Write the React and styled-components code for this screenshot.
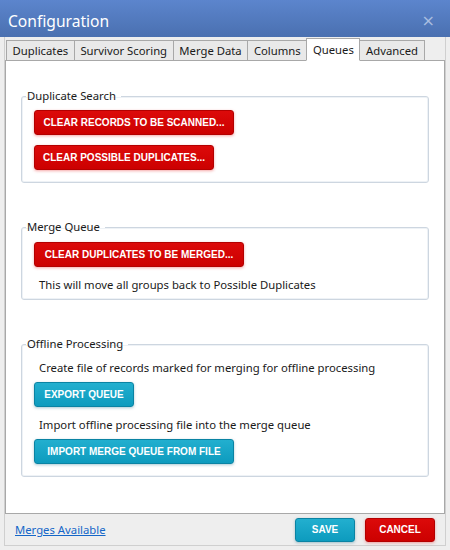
import React, { useState } from "react"
import styled, { createGlobalStyle } from "styled-components"

const GlobalStyle = createGlobalStyle`
  html, body {
    margin: 0;
    padding: 0;
    background: #eeeeee;
  }
  body {
    font-family: "Noto Sans", "Open Sans", sans-serif;
    font-size: 11.3px;
    color: #1a1a1a;
  }
`

const tabs = ["Duplicates", "Survivor Scoring", "Merge Data", "Columns", "Queues", "Advanced"]

const App = () => {
  const [active, setActive] = useState("Queues")

  return (
    <Window>
      <GlobalStyle />
      <TitleBar>
        <Title>Configuration</Title>
        <Close>×</Close>
      </TitleBar>
      <Frame>
        <TabStrip>
          {tabs.map((t) => (
            <Tab key={t} active={t === active} onClick={() => setActive(t)}>
              {t}
            </Tab>
          ))}
        </TabStrip>
        <Panel>
          <GroupBox>
            <Legend>Duplicate Search</Legend>
            <ActionButton color="red" width={200}>
              CLEAR RECORDS TO BE SCANNED...
            </ActionButton>
            <ActionButton color="red" width={180}>
              CLEAR POSSIBLE DUPLICATES...
            </ActionButton>
          </GroupBox>

          <GroupBox bottom={6}>
            <Legend>Merge Queue</Legend>
            <ActionButton color="red" width={210} top={1}>
              CLEAR DUPLICATES TO BE MERGED...
            </ActionButton>
            <Note>This will move all groups back to Possible Duplicates</Note>
          </GroupBox>

          <GroupBox top={8}>
            <Legend>Offline Processing</Legend>
            <Note>Create file of records marked for merging for offline processing</Note>
            <ActionButton color="blue" width={100} tight>
              EXPORT QUEUE
            </ActionButton>
            <Note>Import offline processing file into the merge queue</Note>
            <ActionButton color="blue" width={200} tight>
              IMPORT MERGE QUEUE FROM FILE
            </ActionButton>
          </GroupBox>
        </Panel>
        <Footer>
          <Link href="#">Merges Available</Link>
          <FooterButtons>
            <ActionButton color="blue" width={60} height={24}>
              SAVE
            </ActionButton>
            <ActionButton color="red" width={70} height={24}>
              CANCEL
            </ActionButton>
          </FooterButtons>
        </Footer>
      </Frame>
    </Window>
  )
}

export default App

const Window = styled.div`
  width: 450px;
  height: 550px;
  display: flex;
  flex-direction: column;
  background: #eeeeee;
  overflow: hidden;
`

const TitleBar = styled.div`
  height: 37px;
  box-sizing: border-box;
  flex-shrink: 0;
  display: flex;
  align-items: center;
  justify-content: space-between;
  padding: 4px 15px 0 8px;
  background: linear-gradient(#5c85cd, #4a70b0);
`

const Title = styled.div`
  color: #ffffff;
  font-size: 15.6px;
`

const Close = styled.div`
  color: #a9bde0;
  font-family: "DejaVu Sans", sans-serif;
  font-size: 16px;
`

const Frame = styled.div`
  flex: 1;
  margin: 0 4px 4px 4px;
  border: 1px solid #cfcfcf;
  border-top: none;
  display: flex;
  flex-direction: column;
  min-height: 0;
`

const TabStrip = styled.div`
  display: flex;
  align-items: flex-end;
  height: 24px;
  padding-left: 1px;
  margin-bottom: -1px;
  position: relative;
  z-index: 1;
`

const Tab = styled.div`
  height: ${(props) => (props.active ? "23px" : "21px")};
  box-sizing: border-box;
  padding: 0 5.6px;
  display: flex;
  align-items: center;
  white-space: nowrap;
  border: 1px solid #a8a8a8;
  border-bottom: ${(props) => (props.active ? "1px solid #ffffff" : "1px solid #a8a8a8")};
  margin-left: -1px;
  background: ${(props) => (props.active ? "#ffffff" : "#e9e9e9")};
  color: #1a1a1a;
  font-size: 11.3px;
  cursor: pointer;
  position: relative;
  z-index: ${(props) => (props.active ? 2 : 1)};
  &:first-child {
    margin-left: 0;
  }
`

const Panel = styled.div`
  flex: 1;
  background: #ffffff;
  border: 1px solid #a8a8a8;
  padding: 27px 15px 0 15px;
  display: flex;
  flex-direction: column;
  gap: 36px;
`

const GroupBox = styled.fieldset`
  margin: 0;
  border: 1px solid #cdd6e0;
  box-shadow: inset 0 0 0 1px #eef2f6;
  border-radius: 3px;
  padding: ${(props) => props.top ?? 6}px 12px ${(props) => props.bottom ?? 12}px 12px;
  display: flex;
  flex-direction: column;
  align-items: flex-start;
  gap: 10px;
`

const Legend = styled.legend`
  padding: 0 5px 0 1px;
  margin-left: -8px;
  font-size: 11.3px;
  line-height: 16px;
  color: #1a1a1a;
`

const palettes = {
  red: {
    bg: "linear-gradient(#dc0a0a, #cc0000)",
    border: "#b30000",
    glow: "rgba(235, 60, 60, 0.45)",
  },
  blue: {
    bg: "linear-gradient(#22afcf, #0d9bbe)",
    border: "#0a83a3",
    glow: "rgba(10, 100, 130, 0.35)",
  },
}

const ActionButton = styled.button`
  width: ${(props) => props.width}px;
  height: ${(props) => props.height ?? 25}px;
  margin-top: ${(props) => (props.top ? props.top : props.tight ? -4 : 0)}px;
  box-sizing: border-box;
  padding: 0;
  border: 1px solid ${(props) => palettes[props.color].border};
  border-radius: 3px;
  background: ${(props) => palettes[props.color].bg};
  box-shadow: 0 1px 3px ${(props) => palettes[props.color].glow};
  color: #ffffff;
  font-family: "Liberation Sans", Arial, sans-serif;
  font-weight: bold;
  font-size: 10px;
  text-align: center;
  cursor: pointer;
`

const Note = styled.div`
  font-size: 11.3px;
  line-height: 16px;
  padding-left: 5px;
  color: #1a1a1a;
`

const Footer = styled.div`
  height: 31px;
  flex-shrink: 0;
  display: flex;
  align-items: center;
  justify-content: space-between;
  padding: 0 10px;
`

const Link = styled.a`
  color: #1466c8;
  font-size: 11.3px;
  text-decoration: underline;
`

const FooterButtons = styled.div`
  display: flex;
  gap: 10px;
`
